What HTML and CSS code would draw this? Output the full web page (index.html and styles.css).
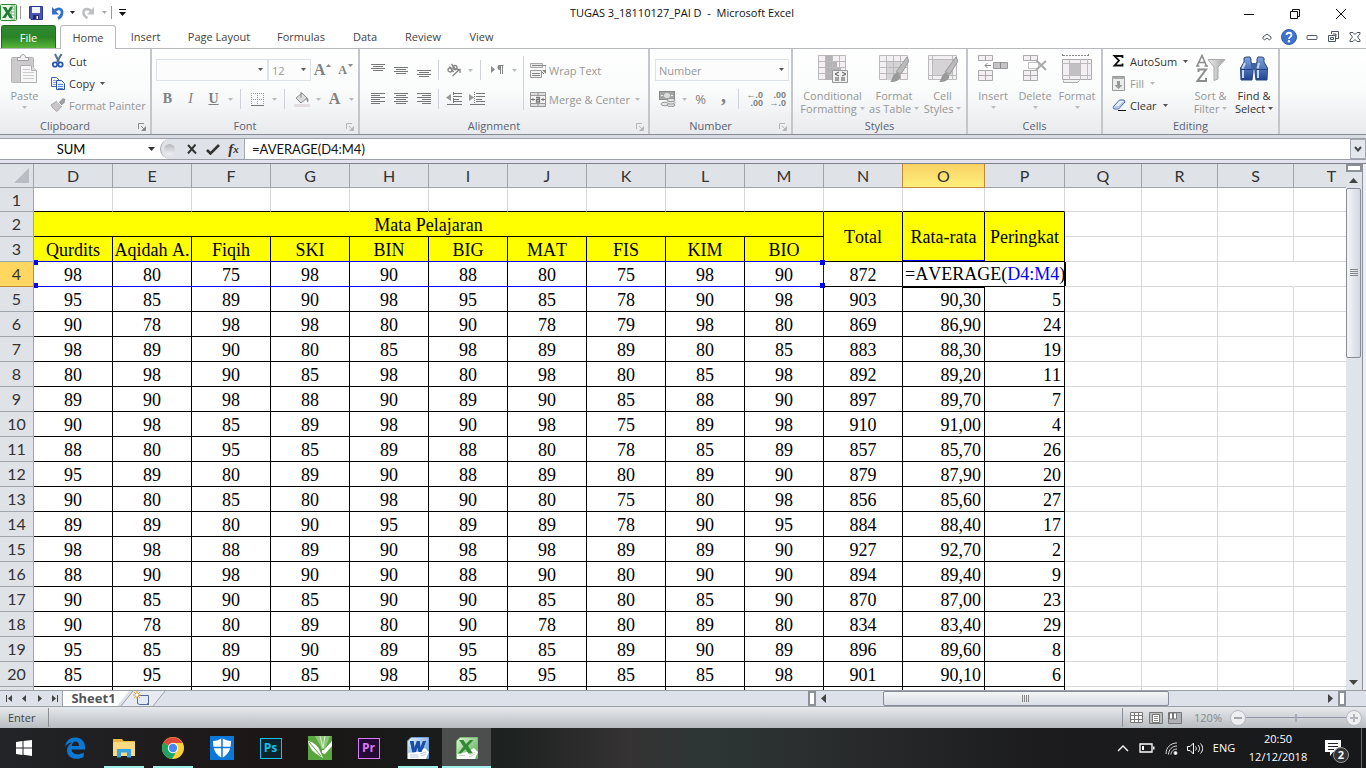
FILE: index.html
```html
<!DOCTYPE html>
<html lang="en">
<head>
<meta charset="utf-8">
<title>TUGAS 3_18110127_PAI D - Microsoft Excel</title>
<link rel="stylesheet" href="styles.css">
</head>
<body>
<svg class="defs" aria-hidden="true">
  <symbol id="dn" viewBox="0 0 7 4"><path d="M0 0h7L3.500 4z" fill="currentColor"/></symbol>
  <symbol id="launch" viewBox="0 0 8 8"><path d="M.5 6V.5H6M3 3l3 3M7.500 3.500v4h-4" fill="none" stroke="currentColor"/><path d="M7 4v3H4z" fill="currentColor"/></symbol>
  <linearGradient id="gBlue" x1="0" y1="0" x2="0" y2="1"><stop offset="0" stop-color="#7fa6e0"/><stop offset="1" stop-color="#1f4396"/></linearGradient>
  <linearGradient id="gGreen" x1="0" y1="0" x2="1" y2="1"><stop offset="0" stop-color="#e4f5dd"/><stop offset="1" stop-color="#4fa84a"/></linearGradient>
  <linearGradient id="gWord" x1="0" y1="0" x2="1" y2="1"><stop offset="0" stop-color="#eaf3fd"/><stop offset="1" stop-color="#4d8ed8"/></linearGradient>
  <linearGradient id="gGrey" x1="0" y1="0" x2="1" y2="0"><stop offset="0" stop-color="#eee"/><stop offset="1" stop-color="#a5a5a5"/></linearGradient>
</svg>

<header class="titlebar">
  <div class="quick">
    <svg width="17" height="17" viewBox="0 0 17 17"><rect x=".5" y=".5" width="16" height="16" rx="1" fill="#e9f6e6" stroke="#2d8a3a"/><path d="M11 2h4v13h-4z" fill="#fff" stroke="#6bb36a"/><path d="M11 5h4M11 8h4M11 11h4" stroke="#6bb36a"/><path d="M2.500 3h3.500l2 3.500L10 3h3L9.500 8.500 13 14H9.500L7.500 10.500 5.500 14H2l4-5.500z" fill="#1d7c33"/></svg>
    <i class="qsep"></i>
    <button aria-label="Save"><svg width="14" height="14" viewBox="0 0 14 14"><path d="M.5.500h13v13H2l-1.500-1.500z" fill="#4a54b8" stroke="#2c3590"/><path d="M3 1h8v6H3z" fill="#f2f6ff"/><path d="M4 9h6v4H4z" fill="#222b66"/><path d="M7.500 10H9v3H7.500z" fill="#fff"/></svg></button>
    <button aria-label="Undo" class="undo"><svg width="14" height="14" viewBox="0 0 14 14"><path d="M3.500 5C7 1.500 11.500 2.500 11 7c-.2 3-2 4.500-4 5.500" fill="none" stroke="#3470c8" stroke-width="2.800"/><path d="M1 1v7.500h7z" fill="#3470c8"/></svg></button>
    <button aria-label="Undo list" class="tiny dark"><svg width="5" height="3"><use href="#dn"/></svg></button>
    <button aria-label="Redo"><svg width="14" height="14" viewBox="0 0 14 14"><path d="M10 5C7 2 2.500 2.500 2.500 6.500c0 3 2 4.500 4 5.500" fill="none" stroke="#bcbfc3" stroke-width="2.600"/><path d="M13 1v7.500H6z" fill="#bcbfc3"/></svg></button>
    <button aria-label="Redo list" class="tiny"><svg width="5" height="3"><use href="#dn"/></svg></button>
    <i class="qsep"></i>
    <button aria-label="Customize Quick Access Toolbar" class="custom"><svg width="7" height="7" viewBox="0 0 7 7"><path d="M0 .500h7" stroke="#111"/><path d="M0 3h7L3.500 7z" fill="#111"/></svg></button>
  </div>
  <h1>TUGAS 3_18110127_PAI D&nbsp; -&nbsp; Microsoft Excel</h1>
  <div class="winbtns">
    <button aria-label="Minimize"><svg width="12" height="12"><path d="M1 6.500h10" stroke="#111"/></svg></button>
    <button aria-label="Restore"><svg width="12" height="12" fill="none" stroke="#111"><path d="M1.500 3.500h7v7h-7zM3.500 3V1.500h7v7H9"/></svg></button>
    <button aria-label="Close"><svg width="12" height="12" stroke="#111"><path d="M1 1l10 10M11 1L1 11"/></svg></button>
  </div>
</header>

<nav class="tabs">
  <button class="file">File</button>
  <button class="tab home">Home</button>
  <button class="tab t-ins">Insert</button>
  <button class="tab t-page">Page Layout</button>
  <button class="tab t-form">Formulas</button>
  <button class="tab t-data">Data</button>
  <button class="tab t-rev">Review</button>
  <button class="tab t-view">View</button>
  <div class="docbtns">
    <button aria-label="Minimize ribbon"><svg width="10" height="8" fill="none" stroke="#4c5560"><path d="M1 4l4-3 4 3v1.500L7.500 7 5 5 2.500 7 1 5.500z"/></svg></button>
    <button aria-label="Help"><svg width="16" height="16"><circle cx="8" cy="8" r="7.500" fill="#3d74c9" stroke="#2c5cae"/><path d="M5.500 6C5.500 3 10.500 3 10.500 6 10.500 7.800 8 8 8 10" fill="none" stroke="#fff" stroke-width="1.800"/><circle cx="8" cy="12.300" r="1.200" fill="#fff"/></svg></button>
    <button aria-label="Minimize window"><svg width="12" height="8"><rect x="1" y="2.500" width="10" height="4" rx="1" fill="none" stroke="#4c5560"/></svg></button>
    <button aria-label="Restore window"><svg width="13" height="12" fill="none" stroke="#4c5560"><path d="M4.500 3V.500h7v7H9M1.500 4.500h7v6h-7zM3.500 6.500h3v2h-3zM6 3h3v2.500"/></svg></button>
    <button aria-label="Close window"><svg width="12" height="10" fill="none" stroke="#4c5560"><path d="M1 .500h3l2 2 2-2h3v1.500L8.500 5 11 8v1.500H8l-2-2-2 2H1V8l2.500-3L1 2z"/></svg></button>
  </div>
</nav>

<main class="ribbon">
  <section class="group g-clip">
    <div class="body">
      <button class="big paste off"><svg width="28" height="30" viewBox="0 0 28 30"><rect x=".5" y="3.500" width="22" height="25" rx="1" fill="#cdcacd" stroke="#b5b2b5"/><path d="M6.500 6.500V3.500h3c0-4 5-4 5 0h3v3z" fill="#f1f1f1" stroke="#9d9d9d"/><path d="M9.500 11.500h11l5 5v12h-16z" fill="#f7f7f7" stroke="#b0b0b0"/><path d="M20.500 11.500v5h5" fill="#ddd" stroke="#b0b0b0"/><path d="M12 15.500h7M12 18.500h11M12 21.500h11M12 24.500h11" stroke="#ccc"/></svg><span>Paste</span><svg class="ar" width="5" height="3"><use href="#dn"/></svg></button>
      <div class="stack clipstack">
        <button class="row"><svg width="16" height="16" viewBox="0 0 16 16"><path d="M5 1l4 8M11.500 1L7 9" stroke="#56708f" stroke-width="2"/><circle cx="5" cy="11.500" r="2.200" fill="none" stroke="#2a59b0" stroke-width="1.800"/><circle cx="10.500" cy="11.500" r="2.200" fill="none" stroke="#2a59b0" stroke-width="1.800"/></svg>Cut</button>
        <button class="row"><svg width="16" height="16" viewBox="0 0 16 16"><path d="M1.500 2.500h5l3 3v6h-8z" fill="#fff" stroke="#3c69b8"/><path d="M3 5.500h3M3 7.500h4M3 9.500h4" stroke="#7fa3dc"/><path d="M6.500 5.500h5l3 3v6h-8z" fill="#e6effc" stroke="#2c57a8"/><path d="M8 9.500h5M8 11.500h5M8 13.500h5" stroke="#5d8ad0"/></svg>Copy<svg class="ar" width="5" height="3"><use href="#dn"/></svg></button>
        <button class="row off"><svg width="16" height="16" viewBox="0 0 16 16"><path d="M9 5l4-4 2.500 1-1 4-4 3z" fill="#9f9f9f"/><path d="M1 8l6-4 5 5-5 5.500C5 13 2 11 1 8z" fill="#c9c6c9" stroke="#aaa"/><path d="M7 4l5 5" stroke="#fff"/></svg>Format Painter</button>
      </div>
    </div>
    <footer>Clipboard<svg class="launch dk" width="8" height="8"><use href="#launch"/></svg></footer>
  </section>

  <section class="group g-font">
    <div class="body rows">
      <div class="line">
        <label class="combo c-font"><select aria-label="Font"><option></option></select><svg class="ar" width="5" height="3"><use href="#dn"/></svg></label>
        <label class="combo c-size"><select aria-label="Font size"><option>12</option></select><svg class="ar" width="5" height="3"><use href="#dn"/></svg></label>
        <button class="ib serif grow" aria-label="Grow font">A<svg width="5" height="3"><path d="M0 3h5L2.500 0z" fill="#888"/></svg></button>
        <button class="ib serif shrink" aria-label="Shrink font">A<svg width="5" height="3"><use href="#dn"/></svg></button>
      </div>
      <div class="line">
        <button class="ib serif b">B</button><button class="ib serif i">I</button><button class="ib serif u">U</button><button class="da" aria-label="Underline styles"><svg width="5" height="3"><use href="#dn"/></svg></button>
        <i class="vs"></i>
        <button class="ib" aria-label="Borders"><svg width="13" height="13" viewBox="0 0 13 13"><path d="M.5 0v12M6.500 0v12M12.500 0v12M0 .500h13M0 6.500h13" stroke="#9a9a9a" stroke-dasharray="1 1"/><path d="M0 12.500h13" stroke="#777"/></svg></button><button class="da" aria-label="Border styles"><svg width="5" height="3"><use href="#dn"/></svg></button>
        <i class="vs"></i>
        <button class="ib" aria-label="Fill color"><svg width="16" height="16" viewBox="0 0 16 16"><path d="M2 7l6-5 5 5-6 5z" fill="#ddd" stroke="#8d8d8d"/><path d="M7 1v6" stroke="#8d8d8d"/><path d="M12 6c2.500 1 3 3 2 5.500-1.500-1-1.500-3-2-5.500z" fill="#8a8a8a"/><path d="M0 13h16v3H0z" fill="#e3dde3"/></svg></button><button class="da" aria-label="Fill colors"><svg width="5" height="3"><use href="#dn"/></svg></button>
        <button class="ib serif fc">A</button><button class="da" aria-label="Font colors"><svg width="5" height="3"><use href="#dn"/></svg></button>
      </div>
    </div>
    <footer>Font<svg class="launch" width="8" height="8"><use href="#launch"/></svg></footer>
  </section>

  <section class="group g-align">
    <div class="body">
      <div class="rows alignleft">
        <div class="line">
          <button class="ib" aria-label="Top align"><svg width="14" height="14" stroke="#777"><path d="M0 1.500h14M2 3.500h10M0 5.500h14M2 7.500h10"/></svg></button>
          <button class="ib" aria-label="Middle align"><svg width="14" height="14" stroke="#777"><path d="M0 4.500h14M2 6.500h10M0 8.500h14M2 10.500h10"/></svg></button>
          <button class="ib" aria-label="Bottom align"><svg width="14" height="14" stroke="#777"><path d="M0 7.500h14M2 9.500h10M0 11.500h14M2 13.500h10"/></svg></button>
          <i class="vs n"></i>
          <button class="ib" aria-label="Orientation"><svg width="16" height="14" viewBox="0 0 16 14"><g fill="none" stroke="#858585" stroke-width="1.300"><circle cx="4" cy="7" r="2"/><path d="M3.500 3.500l4 5.500M5.500 1l4.500 6"/><circle cx="9" cy="4.500" r="2"/><path d="M6.500 13l7-6.500M10.500 6.500h3.500V10"/></g></svg></button><button class="da" aria-label="Orientations"><svg width="5" height="3"><use href="#dn"/></svg></button>
          <i class="vs"></i>
          <button class="ib" aria-label="Text direction"><svg width="13" height="10" viewBox="0 0 13 10"><path d="M0 1l4 3.500L0 8z" fill="#8a8a8a"/><path d="M12.500.500H7.500M9.500 0v9M11.500 0v9" stroke="#858585"/><path d="M9 0a2.500 2.500 0 0 0 0 5z" fill="#858585"/></svg></button><button class="da" aria-label="Text directions"><svg width="5" height="3"><use href="#dn"/></svg></button>
        </div>
        <div class="line">
          <button class="ib" aria-label="Align left"><svg width="14" height="12" stroke="#777"><path d="M0 .500h14M0 2.500h9M0 4.500h14M0 6.500h9M0 8.500h14M0 10.500h9"/></svg></button>
          <button class="ib" aria-label="Center"><svg width="14" height="12" stroke="#777"><path d="M0 .500h14M2 2.500h10M0 4.500h14M2 6.500h10M0 8.500h14M2 10.500h10"/></svg></button>
          <button class="ib" aria-label="Align right"><svg width="14" height="12" stroke="#777"><path d="M0 .500h14M5 2.500h9M0 4.500h14M5 6.500h9M0 8.500h14M5 10.500h9"/></svg></button>
          <i class="vs n"></i>
          <button class="ib" aria-label="Decrease indent"><svg width="16" height="14" stroke="#777"><path d="M7 1.500h9M7 4.500h9M7 7.500h6M7 9.500h9M1 12.500h15" /><path d="M7.500 0v14" stroke-dasharray="1 1"/><path d="M5 2v7L0 5.500z" fill="#999" stroke="none"/></svg></button>
          <button class="ib" aria-label="Increase indent"><svg width="16" height="14" stroke="#777"><path d="M7 1.500h9M7 4.500h9M7 7.500h6M7 9.500h9M1 12.500h15" /><path d="M5.500 0v14" stroke-dasharray="1 1"/><path d="M0 2v7l5-3.500z" fill="#999" stroke="none"/></svg></button>
        </div>
      </div>
      <i class="vs tall"></i>
      <div class="rows wraprows">
        <button class="row off line"><svg width="16" height="15" viewBox="0 0 16 15"><path d="M.5.500h12v4H.500z" fill="#e8e6e8" stroke="#aaa"/><path d="M2 2.500h14v5M11 8l3 3" fill="none" stroke="#888"/><path d="M.5 7.500h11v7H.500z" fill="#f3f3f3" stroke="#999"/><path d="M2 10.500h8M2 12.500h8" stroke="#888"/><path d="M12 7h4v4z" fill="#888"/></svg>Wrap Text</button>
        <button class="row off line"><svg width="16" height="15" viewBox="0 0 16 15"><path d="M.5.500h15v14H.500z" fill="#ddd" stroke="#999"/><path d="M1 3.500h14M1 11.500h14M8 0v3M8 12v3" stroke="#999"/><path d="M1 4h14v7H1z" fill="#f6f6f6"/><path d="M1 7.500h4M11 7.500h4M3 6v3M13 6v3" stroke="#777"/><path d="M6 5.500h3.500v4.500H6.500V7.500h3" fill="none" stroke="#777" stroke-width="1.300"/></svg>Merge &amp; Center<svg class="ar" width="5" height="3"><use href="#dn"/></svg></button>
      </div>
    </div>
    <footer>Alignment<svg class="launch" width="8" height="8"><use href="#launch"/></svg></footer>
  </section>

  <section class="group g-num">
    <div class="body rows">
      <div class="line">
        <label class="combo c-num"><select aria-label="Number format"><option>Number</option></select><svg class="ar" width="5" height="3"><use href="#dn"/></svg></label>
      </div>
      <div class="line numline">
        <button class="ib" aria-label="Accounting format"><svg width="17" height="16" viewBox="0 0 17 16"><rect x=".5" y=".5" width="15" height="8" fill="#a5a5a5" stroke="#8a8a8a"/><ellipse cx="8" cy="4.500" rx="3" ry="2.500" fill="#ddd"/><path d="M2 4.500h2M12 4.500h2" stroke="#eee"/><g fill="#e4e4e4" stroke="#999"><ellipse cx="6" cy="13" rx="4" ry="1.800"/><ellipse cx="12" cy="14" rx="4" ry="1.600"/><ellipse cx="12" cy="11.500" rx="4" ry="1.600"/><ellipse cx="12" cy="9" rx="4" ry="1.600"/></g></svg></button><button class="da" aria-label="Accounting formats"><svg width="5" height="3"><use href="#dn"/></svg></button>
        <button class="ib pct">%</button><button class="ib comma">,</button><i class="vs n"></i>
        <button class="ib dec" aria-label="Increase decimal"><span>←.0</span><span>.00</span></button>
        <button class="ib dec" aria-label="Decrease decimal"><span>.00</span><span>→.0</span></button>
      </div>
    </div>
    <footer>Number<svg class="launch" width="8" height="8"><use href="#launch"/></svg></footer>
  </section>

  <section class="group g-style">
    <div class="body">
      <button class="big off w70"><svg width="30" height="30" viewBox="0 0 30 30"><path d="M.5 1.500h27v24H.500z" fill="#f3eff3" stroke="#bbb"/><path d="M8 1h7v25H8zM15 8h4v6h-4zM15 14h8v6h-8z" fill="#b5b3b5"/><path d="M7.500 1v25M14.500 1v25M21.500 1v25M0 7.500h28M0 13.500h28M0 19.500h28" stroke="#bbb"/><path d="M14.500 16.500h15v12h-15z" fill="#efefef" stroke="#999"/><path d="M21 18l-4 2 4 2M17 24h4M17 26h4M24 18l4 2-4 2M23 24h4M23 26h4" fill="none" stroke="#555"/></svg><span>Conditional<br>Formatting <svg class="ar" width="5" height="3"><use href="#dn"/></svg></span></button>
      <button class="big off w52"><svg width="30" height="30" viewBox="0 0 30 30"><path d="M.5 1.500h28v24H.500z" fill="#f3eff3" stroke="#bbb"/><path d="M7 7h15v19H7z" fill="#d5d3d5"/><path d="M7.500 1v25M14.500 1v25M21.500 1v25M0 7.500h28M0 13.500h28M0 19.500h28" stroke="#bbb"/><path d="M28 3l2 4-8 13-5-2z" fill="#bbb" stroke="#999"/><path d="M11 28c2-1 2-7 6-9 3 0 5 2 4 5-2 4-7 4-10 4z" fill="#999"/></svg><span>Format<br>as Table <svg class="ar" width="5" height="3"><use href="#dn"/></svg></span></button>
      <button class="big off w44"><svg width="30" height="30" viewBox="0 0 30 30"><path d="M.5 1.500h28v24H.500z" fill="#f3eff3" stroke="#bbb"/><path d="M5 6h19v15H5z" fill="#d5d3d5"/><path d="M4.500 1v25M24.500 1v25M0 5.500h28M0 21.500h28" stroke="#bbb"/><path d="M28 3l2 4-8 13-5-2z" fill="#bbb" stroke="#999"/><path d="M11 28c2-1 2-7 6-9 3 0 5 2 4 5-2 4-7 4-10 4z" fill="#999"/></svg><span>Cell<br>Styles <svg class="ar" width="5" height="3"><use href="#dn"/></svg></span></button>
    </div>
    <footer>Styles</footer>
  </section>

  <section class="group g-cells">
    <div class="body">
      <button class="big off w42"><svg width="30" height="30" viewBox="0 0 30 30"><path d="M.5 1.500h14v5H.500zM7.500 1v6M.5 16.500h14v10H.500zM7.500 16v11M0 21.500h15" fill="#f3eff3" stroke="#aaa"/><path d="M15.500 8.500h14v6h-14z" fill="#c5c3c5" stroke="#999"/><path d="M22.500 8v6M13 11.500H7M9.500 9L7 11.500 9.500 14" fill="none" stroke="#888"/></svg><span>Insert</span><svg class="ar" width="5" height="3"><use href="#dn"/></svg></button>
      <button class="big off w42"><svg width="30" height="30" viewBox="0 0 30 30"><path d="M3.500 1.500h14v5h-14zM10.500 1v6M3.500 16.500h14v10h-14zM10.500 16v11M3 21.500h15" fill="#f3eff3" stroke="#aaa"/><path d="M8.500 8.500h10v6h-10z" fill="none" stroke="#888" stroke-dasharray="1 1"/><path d="M16 6l10 10M26 7L16 16" stroke="#aaa" stroke-width="2"/></svg><span>Delete</span><svg class="ar" width="5" height="3"><use href="#dn"/></svg></button>
      <button class="big off w42"><svg width="30" height="30" viewBox="0 0 30 30"><path d="M.5 0v3M26.500 0v3M1 1.500h25" stroke="#888" stroke-dasharray="2 1"/><path d="M.5 5.500h29v20H.500z" fill="#f3eff3" stroke="#aaa"/><path d="M8 10h10v11H8z" fill="#c2c0c2"/><path d="M7.500 5v21M18.500 5v21M25.500 5v21M0 9.500h30M0 21.500h30" stroke="#bbb" fill="none"/><path d="M1.500 26.500v2h14l2-2" fill="#eee" stroke="#aaa"/></svg><span>Format</span><svg class="ar" width="5" height="3"><use href="#dn"/></svg></button>
    </div>
    <footer>Cells</footer>
  </section>

  <section class="group g-edit">
    <div class="body">
      <div class="stack editstack">
        <button class="row"><svg width="14" height="12" viewBox="0 0 14 12"><path d="M10.500 3V1H2.500l4.500 4.500L2.500 10.500h8v-2" fill="none" stroke="#111" stroke-width="1.800"/></svg>AutoSum<svg class="ar" width="5" height="3"><use href="#dn"/></svg></button>
        <button class="row off"><svg width="14" height="15" viewBox="0 0 14 15"><path d="M.5.500h12v14H.500z" fill="#ececec" stroke="#999"/><path d="M0 1h13v2H0z" fill="#aaa"/><path d="M5 5h3v4h2.500l-4 4-4-4H5z" fill="#999"/></svg>Fill<svg class="ar" width="5" height="3"><use href="#dn"/></svg></button>
        <button class="row"><svg width="14" height="12" viewBox="0 0 14 12"><path d="M1 8l6.500-7h4.500l1 2-6.500 7H2z" fill="#e6eefb" stroke="#3f64a8"/><path d="M1 8h5.500l6-6" fill="none" stroke="#8aa5d6"/><path d="M6 11.500h8" stroke="#111"/></svg>Clear<svg class="ar" width="5" height="3"><use href="#dn"/></svg></button>
      </div>
      <button class="big off w44"><svg width="30" height="30" viewBox="0 0 30 30"><path d="M12 5.500h17L22 13v12l-4 1.500V13z" fill="url(#gGrey)" stroke="#aaa"/><path d="M1 12L6 1.500 10.500 12M3 8.500h6M0 12h3.500M8.500 12H12" fill="none" stroke="#8d8d8d" stroke-width="1.600"/><path d="M2.500 18v-2.500H10L1.500 27H10V24" fill="none" stroke="#8d8d8d" stroke-width="2"/></svg><span>Sort &amp;<br>Filter <svg class="ar" width="5" height="3"><use href="#dn"/></svg></span></button>
      <button class="big w42 on"><svg width="30" height="30" viewBox="0 0 30 30"><path d="M7 3h4l1 2v3l2 3v7l-1 8H2l-.5-12L5 8V4z" fill="url(#gBlue)" stroke="#2b4679"/><path d="M23 3h-4l-1 2v3l-2 3v7l1 8h11l.5-12L25 8V4z" fill="url(#gBlue)" stroke="#2b4679"/><path d="M12 9h6v7h-6z" fill="#41629f"/><path d="M3.500 14.500L6 9M18.500 14.500L20 9M4 16v8M19 16v8" stroke="#c6d8f5" stroke-width="2"/><path d="M2 15.500h11M17 15.500h11" stroke="#27427c"/></svg><span>Find &amp;<br>Select <svg class="ar" width="5" height="3"><use href="#dn"/></svg></span></button>
    </div>
    <footer>Editing</footer>
  </section>
</main>

<div class="formula">
  <input class="namebox" aria-label="Name box" value="SUM">
  <button class="namedrop" aria-label="Names"><svg width="7" height="4"><use href="#dn"/></svg></button>
  <div class="fbtns">
    <i class="dot"></i>
    <button aria-label="Cancel"><svg width="10" height="10"><path d="M1 1l8 8.500M8.500.500L1 9.500" stroke="#333" stroke-width="2"/></svg></button>
    <button aria-label="Enter"><svg width="14" height="11"><path d="M1 6l3.500 3.500L13 1" fill="none" stroke="#333" stroke-width="2.600"/></svg></button>
    <button class="fx" aria-label="Insert function">f<small>x</small></button>
  </div>
  <input class="finput" aria-label="Formula" value="=AVERAGE(D4:M4)">
  <button class="expand" aria-label="Expand formula bar"><svg width="8" height="6"><path d="M1 1l3 3.500L7 1" fill="none" stroke="#444" stroke-width="2"/></svg></button>
</div>

<div class="sheetwrap">
  <div class="sheet">
    <table>
      <colgroup><col class="ch"><col class="c79" span="11"><col class="c82"><col class="c80"><col class="c77"><col class="c76" span="3"></colgroup>
      <thead><tr><th class="corner"><svg width="15" height="15"><path d="M15 0v15H0z" fill="#b9bec4"/></svg><th>D<th>E<th>F<th>G<th>H<th>I<th>J<th>K<th>L<th>M<th>N<th class="sel">O<th>P<th>Q<th>R<th>S<th>T</tr></thead>
      <tbody>
      <tr class="r1"><th>1<td><td><td><td><td><td><td><td><td><td><td><td><td><td class="x"><td class="x"><td class="x"><td class="x"></tr>
      <tr class="hd"><th>2<td colspan="10">Mata Pelajaran<td rowspan="2">Total<td rowspan="2">Rata-rata<td rowspan="2">Peringkat<td class="x"><td class="x"><td class="x"><td class="x"></tr>
      <tr class="hd h3"><th>3<td>Qurdits<td>Aqidah A.<td>Fiqih<td>SKI<td>BIN<td>BIG<td>MAT<td>FIS<td>KIM<td>BIO<td class="x"><td class="x"><td class="x"><td class="x"></tr>
      <tr class="r4"><th class="sel">4<td class="rf"><i class="h tl"></i><i class="h bl"></i>98<td class="rf">80<td class="rf">75<td class="rf">98<td class="rf">90<td class="rf">88<td class="rf">80<td class="rf">75<td class="rf">98<td class="rf last"><i class="h tr"></i><i class="h br"></i>90<td>872<td class="active"><i class="outline"></i><div class="editor" role="textbox" contenteditable="true" aria-label="Cell O4">=AVERAGE(<span>D4:M4</span>)</div><td><td class="x"><td class="x"><td class="x nr"><td class="x"></tr>
      <tr><th>5<td>95<td>85<td>89<td>90<td>98<td>95<td>85<td>78<td>90<td>98<td>903<td class="n">90,30<td class="n">5<td class="x"><td class="x"><td class="x"><td class="x"></tr>
      <tr><th>6<td>90<td>78<td>98<td>98<td>80<td>90<td>78<td>79<td>98<td>80<td>869<td class="n">86,90<td class="n">24<td class="x"><td class="x"><td class="x"><td class="x"></tr>
      <tr><th>7<td>98<td>89<td>90<td>80<td>85<td>98<td>89<td>89<td>80<td>85<td>883<td class="n">88,30<td class="n">19<td class="x"><td class="x"><td class="x"><td class="x"></tr>
      <tr><th>8<td>80<td>98<td>90<td>85<td>98<td>80<td>98<td>80<td>85<td>98<td>892<td class="n">89,20<td class="n">11<td class="x"><td class="x"><td class="x"><td class="x"></tr>
      <tr><th>9<td>89<td>90<td>98<td>88<td>90<td>89<td>90<td>85<td>88<td>90<td>897<td class="n">89,70<td class="n">7<td class="x"><td class="x"><td class="x"><td class="x"></tr>
      <tr><th>10<td>90<td>98<td>85<td>89<td>98<td>90<td>98<td>75<td>89<td>98<td>910<td class="n">91,00<td class="n">4<td class="x"><td class="x"><td class="x"><td class="x"></tr>
      <tr><th>11<td>88<td>80<td>95<td>85<td>89<td>88<td>80<td>78<td>85<td>89<td>857<td class="n">85,70<td class="n">26<td class="x"><td class="x"><td class="x"><td class="x"></tr>
      <tr><th>12<td>95<td>89<td>80<td>89<td>90<td>88<td>89<td>80<td>89<td>90<td>879<td class="n">87,90<td class="n">20<td class="x"><td class="x"><td class="x"><td class="x"></tr>
      <tr><th>13<td>90<td>80<td>85<td>80<td>98<td>90<td>80<td>75<td>80<td>98<td>856<td class="n">85,60<td class="n">27<td class="x"><td class="x"><td class="x"><td class="x"></tr>
      <tr><th>14<td>89<td>89<td>80<td>90<td>95<td>89<td>89<td>78<td>90<td>95<td>884<td class="n">88,40<td class="n">17<td class="x"><td class="x"><td class="x"><td class="x"></tr>
      <tr><th>15<td>98<td>98<td>88<td>89<td>90<td>98<td>98<td>89<td>89<td>90<td>927<td class="n">92,70<td class="n">2<td class="x"><td class="x"><td class="x"><td class="x"></tr>
      <tr><th>16<td>88<td>90<td>98<td>90<td>90<td>88<td>90<td>80<td>90<td>90<td>894<td class="n">89,40<td class="n">9<td class="x"><td class="x"><td class="x"><td class="x"></tr>
      <tr><th>17<td>90<td>85<td>90<td>85<td>90<td>90<td>85<td>80<td>85<td>90<td>870<td class="n">87,00<td class="n">23<td class="x"><td class="x"><td class="x"><td class="x"></tr>
      <tr><th>18<td>90<td>78<td>80<td>89<td>80<td>90<td>78<td>80<td>89<td>80<td>834<td class="n">83,40<td class="n">29<td class="x"><td class="x"><td class="x"><td class="x"></tr>
      <tr><th>19<td>95<td>85<td>89<td>90<td>89<td>95<td>85<td>89<td>90<td>89<td>896<td class="n">89,60<td class="n">8<td class="x"><td class="x"><td class="x"><td class="x"></tr>
      <tr><th>20<td>85<td>95<td>90<td>85<td>98<td>85<td>95<td>85<td>85<td>98<td>901<td class="n">90,10<td class="n">6<td class="x"><td class="x"><td class="x"><td class="x"></tr>
      <tr><th><td><td><td><td><td><td><td><td><td><td><td><td><td><td class="x"><td class="x"><td class="x"><td class="x"></tr>
      </tbody>
    </table>
  </div>
  <div class="vscroll">
    <i class="vsplit"></i>
    <button aria-label="Scroll up"><svg width="9" height="5"><path d="M0 5h9L4.500 0z" fill="#444"/></svg></button>
    <div class="vtrack"><div class="vthumb"><i></i></div></div>
    <button aria-label="Scroll down"><svg width="9" height="5"><path d="M0 0h9L4.500 5z" fill="#444"/></svg></button>
  </div>
</div>

<div class="strip">
  <div class="nav">
    <button aria-label="First sheet"><svg width="7" height="7"><path d="M.5 0v7" stroke="#444"/><path d="M6 0v7L2 3.500z" fill="#444"/></svg></button>
    <button aria-label="Previous sheet"><svg width="7" height="7"><path d="M5 0v7L1 3.500z" fill="#444"/></svg></button>
    <button aria-label="Next sheet"><svg width="7" height="7"><path d="M2 0v7l4-3.500z" fill="#444"/></svg></button>
    <button aria-label="Last sheet"><svg width="7" height="7"><path d="M6.500 0v7" stroke="#444"/><path d="M1 0v7l4-3.500z" fill="#444"/></svg></button>
  </div>
  <button class="sheettab">Sheet1</button>
  <button class="newsheet" aria-label="Insert worksheet"><svg width="46" height="15" viewBox="0 0 46 15"><path d="M13 0H45L33 15H1z" fill="#e8ebf1"/><path d="M13 0L1 15M45 0L33 15" stroke="#9a9fa8"/><path d="M17.500 4.500h11v8l-2 1h-7l-2-1z" fill="#e3ebfa" stroke="#54689a"/><path d="M26 14l3-3v3z" fill="#54689a"/><path d="M17 0v8M13 4h8M14 1l6 6M20 1l-6 6" stroke="#e3a03c"/><circle cx="17" cy="4" r="1.500" fill="#fff"/></svg></button>
  <div class="hscroll">
    <i class="hsplit"></i>
    <button aria-label="Scroll left"><svg width="5" height="9"><path d="M5 0v9L0 4.500z" fill="#444"/></svg></button>
    <div class="htrack"><div class="hthumb"><i></i></div></div>
    <button aria-label="Scroll right"><svg width="5" height="9"><path d="M0 0v9l5-4.500z" fill="#444"/></svg></button>
    <i class="hsplit"></i>
  </div>
</div>

<div class="status">
  <span class="mode">Enter</span>
  <div class="views">
    <button aria-label="Normal view"><svg width="14" height="11" fill="#fff" stroke="#777"><path d="M.5.500h12v10H.500zM4.500 0v11M8.500 0v11M0 3.500h13M0 7.500h13"/></svg></button>
    <button aria-label="Page layout view"><svg width="14" height="12"><path d="M.5.500h13v11H.500z" fill="#bbb" stroke="#777"/><path d="M3.500 2.500h7v8h-7z" fill="#fff" stroke="#777"/><path d="M5 4.500h4M5 6.500h4M5 8.500h4" stroke="#888"/></svg></button>
    <button aria-label="Page break view"><svg width="14" height="12"><path d="M.5.500h13v11H.500z" fill="#aeb2b6" stroke="#777"/><path d="M1.500 1h3v6h-3zM5.500 1h3v6h-3z" fill="#fff" stroke="#777"/></svg></button>
  </div>
  <label class="pct120" for="zoom">120%</label>
  <button class="zb" aria-label="Zoom out"><svg width="16" height="16"><circle cx="8" cy="8" r="7.500" fill="#eceef0" stroke="#b7babf"/><path d="M4 8h8" stroke="#a3a6ac" stroke-width="2"/></svg></button>
  <input type="range" id="zoom" min="0" max="100" value="50">
  <button class="zb" aria-label="Zoom in"><svg width="16" height="16"><circle cx="8" cy="8" r="7.500" fill="#eceef0" stroke="#b7babf"/><path d="M4 8h8M8 4v8" stroke="#b3b6bc" stroke-width="2"/></svg></button>
</div>

<footer class="taskbar">
  <button class="start" aria-label="Start"><svg width="16" height="16" viewBox="0 0 16 16"><path d="M0 2l6.500-1v6.500H0zM7.500.900L16 0v7.500H7.500zM0 8.500h6.500V15L0 14zM7.500 8.500H16V16l-8.500-1.200z" fill="#fff"/></svg></button>
  <button aria-label="Edge"><svg width="20" height="22" viewBox="0 0 20 22"><path d="M0 10C1 3.500 5 .500 10.500.500 16 .500 20 4.500 20 10v2.500H6.500c.3 3 2.500 4.800 6 4.800 2.300 0 4.300-.6 6.200-1.800v4.500c-2 1.200-4.500 1.800-7.200 1.800C6 21.800 2 18.500 2 13.500c0-3.500 2-6.500 5.500-8C4.500 5.500 1.500 7 0 10zm6.700-1h7.300c0-3-1.300-4.500-3.500-4.500-2 0-3.500 1.800-3.800 4.500z" fill="#0b78d4"/></svg></button>
  <button class="run" aria-label="File Explorer"><svg width="22" height="19" viewBox="0 0 22 19"><path d="M0 0h9l1.500 2H22v15H0z" fill="#e9b93f"/><path d="M0 3h22v14H0z" fill="#fbdb82"/><path d="M4 10h14v8.500h-4V13.500H8v5H4z" fill="#34a4e2"/></svg></button>
  <button class="run" aria-label="Chrome"><svg width="22" height="22" viewBox="0 0 22 22"><circle cx="11" cy="11" r="11" fill="#fdd036"/><path d="M11 11L1.500 5.500A11 11 0 0 0 10 22l5-8.500z" fill="#1ea362"/><path d="M1.500 5.500A11 11 0 0 1 20.500 6H11V11z" fill="#dd4a3c"/><circle cx="11" cy="11" r="5.200" fill="#fff"/><circle cx="11" cy="11" r="4.200" fill="#4a89f0"/></svg></button>
  <button aria-label="Defender"><svg width="24" height="24" viewBox="0 0 24 24"><path d="M0 0h24v24H0z" fill="#0a78d7"/><path d="M12 2c3 2 6 3 9 3 0 8-2 13-9 17C5 18 3 13 3 5c3 0 6-1 9-3z" fill="#fff"/><path d="M12 2v20M2 11.500h20" stroke="#0a78d7" stroke-width="1.500"/></svg></button>
  <button aria-label="Photoshop"><span class="app ps">Ps</span></button>
  <button aria-label="CorelDRAW"><svg width="24" height="24" viewBox="0 0 24 24"><path d="M0 0h24v24H0z" fill="#5aa63e"/><path d="M7 0h15l-5 13h-3z" fill="#8fc57a"/><path d="M12 0l3 12M17 0l-2 12" stroke="#d7edcc"/><path d="M0 5c5 1 9 4 11 8l4 9-8-5C3 14 1 10 0 5z" fill="#fff"/><path d="M1 6l12 14" stroke="#5aa63e"/><path d="M14 14l2 0 8-9v5l-7 8-3-1z" fill="#fff"/></svg></button>
  <button aria-label="Premiere"><span class="app pr">Pr</span></button>
  <button class="run" aria-label="Word"><svg width="22" height="22" viewBox="0 0 22 22"><path d="M.5 4L4 .500h17.500v21H.500z" fill="url(#gWord)" stroke="#6d9fd8"/><path d="M3 4h3.500l1 7L10 4h2.500l1 7L16 4h3l-4.500 12h-3l-.8-6-2.200 6h-3z" fill="#1650a8"/><path d="M1 16l9-1 8-4 4 4-3 7H1z" fill="#fff"/><path d="M3 4h3.500l1 7L10 4h2.500l1 7L16 4h3l-4.500 11h-3l-.8-5-2.200 5h-3z" fill="#1650a8"/><path d="M13 17l6-2M14 19l5-2M3 18h8M3 20h9" stroke="#b4cae8"/></svg></button>
  <button class="cur" aria-label="Excel"><svg width="22" height="22" viewBox="0 0 22 22"><path d="M.5 4L4 .500h17.500v21H.500z" fill="url(#gGreen)" stroke="#7dbb74"/><path d="M1 17l10-2 7-4 4 4-3 7H1z" fill="#fff"/><path d="M3 3h4.500l2.500 4 4-4h3.500l-5.500 6 5 7.500h-4.500L9.500 12 5 16.500H2l5.500-7z" fill="#2f8a33"/><path d="M13 18l6-3M13 20l6-3M3 18.500h6" stroke="#bcd8b5"/></svg></button>
  <div class="tray">
    <button class="t1" aria-label="Hidden icons"><svg width="12" height="8"><path d="M1 7l5-5 5 5" fill="none" stroke="#fff" stroke-width="1.400"/></svg></button>
    <button class="t2" aria-label="Battery"><svg width="16" height="10"><path d="M1 1h12v8H1z" fill="none" stroke="#fff" stroke-width="1.300"/><path d="M3 3h2v4H3zM14 3.500h1.500v3H14z" fill="#fff"/></svg></button>
    <button class="t2" aria-label="Network"><svg width="13" height="13" fill="none" stroke="#ddd"><path d="M1 12C1 5 6 1 12 1M3.500 12.500c0-5 4-8.500 8.500-8.500M6 12.500C6 9.500 8.500 7 12 7"/><circle cx="10.500" cy="11" r="1.500" fill="#fff"/></svg></button>
    <button class="t2" aria-label="Volume"><svg width="17" height="13" fill="none" stroke="#fff"><path d="M.5 4.500h2.500L6.500 1v11L3 8.500H.500zM8.500 4.500c1 1.300 1 2.700 0 4M11 3c2 2.300 2 5 0 7M13.500 1.500c2.800 3 2.800 7 0 10"/></svg></button>
    <button class="lang">ENG</button>
    <button class="clock">20:50<br>12/12/2018</button>
    <button class="notif" aria-label="Notifications"><svg width="17" height="16"><path d="M0 0h16v12H8l-3 4v-4H0z" fill="#fff"/><path d="M3 3.500h10M3 6.500h10M3 9.500h6" stroke="#222"/></svg><span>2</span></button>
    <button class="peek" aria-label="Show desktop"></button>
  </div>
</footer>
</body>
</html>
```
FILE: styles.css
```css
* { box-sizing: border-box; }
html, body { height: 100%; }
body {
  margin: 0;
  display: flex;
  flex-direction: column;
  overflow: hidden;
  background: #fff;
  color: #333;
  font: 11px/13px "Open Sans", "Noto Sans", sans-serif;
}
button {
  margin: 0;
  padding: 0;
  border: 0;
  background: none;
  color: inherit;
  font: inherit;
  display: flex;
  align-items: center;
  justify-content: center;
}
svg { flex: none; display: block; }
i { font-style: normal; display: block; flex: none; }
.defs { position: absolute; width: 0; height: 0; }

/* Title bar */
.titlebar { flex: 0 0 25px; display: flex; align-items: center; }
.quick { flex: 1; height: 22px; display: flex; align-items: center; }
.quick button { width: 24px; color: #aaa; }
.quick .undo { width: 20px; }
.quick .tiny { width: 8px; }
.quick .dark { color: #222; }
.quick .custom { width: 14px; }
.qsep { width: 1px; height: 13px; margin: 0 3px; background: #999; }
h1 { margin: 0; font: 11px/16px "Open Sans", sans-serif; color: #111; }
.winbtns { flex: 1; display: flex; justify-content: flex-end; padding-right: 2px; padding-top: 2px; }
.winbtns button { width: 46px; height: 20px; }

/* Ribbon tabs */
.tabs { flex: 0 0 24px; min-height: 0; display: flex; border-bottom: 1px solid #b6babf; padding-left: 1px; }
.tabs .file {
  width: 55px;
  height: 23px;
  margin-right: 4px;
  border: 1px solid #1c6a1f;
  border-bottom: 0;
  border-radius: 3px 3px 0 0;
  background: linear-gradient(#2f8a32, #2a8426 50%, #57b53a);
  color: #fff;
}
.tab { color: #444; }
.home {
  width: 56px;
  height: 24px;
  border: 1px solid #b6babf;
  border-bottom: 0;
  border-radius: 3px 3px 0 0;
  background: #fff;
}
.t-ins { width: 59px; }
.t-page { width: 88px; }
.t-form { width: 76px; }
.t-data { width: 52px; }
.t-rev { width: 64px; }
.t-view { width: 53px; }
.docbtns { margin-left: auto; display: flex; gap: 9px; padding-right: 5px; }

/* Ribbon */
.ribbon {
  flex: 0 0 86px;
  min-height: 0;
  display: flex;
  background: linear-gradient(#fff, #fafbfb 50%, #e8eaed);
  border-bottom: 1px solid #878c94;
}
.group { display: flex; flex-direction: column; border-right: 2px solid #c3c6cb; }
.g-clip { width: 152px; }
.g-font { width: 208px; }
.g-align { width: 290px; }
.g-num { width: 143px; }
.g-style { width: 175px; }
.g-cells { width: 135px; }
.g-edit { width: 177px; }
.body { flex: 1; min-height: 0; display: flex; }
.group footer {
  position: relative;
  flex: 0 0 17px;
  padding-top: 2px;
  text-align: center;
  color: #5a6275;
  padding-right: 20px;
}
.g-style footer, .g-cells footer, .g-edit footer { padding-right: 0; }
.launch { position: absolute; right: 4px; top: 6px; color: #b4b7bb; }
.dk { color: #888; }
.ar { color: #555; }
.off { color: #979797; }
.off .ar { color: #bbb; }
.stack { display: flex; flex-direction: column; padding-top: 1px; }
.row { height: 22px; justify-content: flex-start; gap: 3px; white-space: nowrap; }
.row .ar { margin-left: 2px; }
.clipstack { padding-left: 1px; }
.editstack { width: 76px; }
.editstack .row { gap: 4px; }
.g-edit .body { padding-left: 9px; }
.g-style .body { padding-left: 4px; }
.g-cells .body { padding-left: 4px; }
.big { flex-direction: column; justify-content: flex-start; padding-top: 5px; height: 68px; }
.big span { white-space: nowrap; margin-top: 5px; line-height: 13px; }
.big span .ar { display: inline-block; vertical-align: 3px; }
.big > .ar { margin-top: 4px; }
.paste { width: 49px; }
.w70 { width: 71px; }
.w52 { width: 52px; }
.w44 { width: 45px; }
.w42 { width: 42px; }
.rows { display: flex; flex-direction: column; gap: 7px; padding: 10px 0 0 4px; }
.line { display: flex; align-items: center; height: 22px; }
.ib { width: 23px; height: 22px; color: #808080; }
.da { width: 10px; height: 22px; color: #bbb; }
.vs { width: 1px; height: 20px; margin: 0 5px; background: #cfd2d8; }
.vs.n { margin: 0 3px; }
.vs.tall { height: 54px; margin: 7px 6px 0 0; }
.alignleft { width: 163px; padding-left: 6px; }
.wraprows { padding-left: 0; }
.serif { font: bold 16px/16px "Liberation Serif", serif; }
.serif.i { font-style: italic; font-weight: normal; }
.serif.u { text-decoration: underline; }
.serif.b, .serif.i, .serif.u { font-size: 14px; }
.grow svg, .shrink svg { margin: 0 0 9px 1px; color: #888; }
.serif.shrink { font-size: 12px; }
.combo { position: relative; display: block; height: 22px; }
.combo select {
  appearance: none;
  width: 100%;
  height: 100%;
  padding: 0 3px;
  border: 1px solid #dde1e8;
  border-radius: 0;
  background: #fcfcfd;
  color: #999;
  font: inherit;
}
.combo .ar { position: absolute; right: 5px; top: 9px; }
.c-font { width: 112px; }
.c-size { width: 43px; }
.c-num { width: 134px; margin-left: 1px; }
.numline { padding-left: 2px; }
.pct { font-size: 13px; }
.comma { font: bold 20px/12px "Liberation Serif", serif; padding-bottom: 8px; }
.dec { flex-direction: column; font: bold 9px/8px "Liberation Sans", sans-serif; align-items: flex-end; padding-right: 2px; }

/* Formula bar */
.formula {
  flex: 0 0 22px;
  min-height: 0;
  margin: 3px 0;
  display: flex;
  border: solid #9a9fa8;
  border-width: 1px 0;
  box-shadow: 0 -3px #d8dbe2, 0 3px #e3e4f0;
}
.namebox { width: 142px; border: 0; text-align: center; font: 13px/18px Lato, sans-serif; padding: 0; }
.namedrop { width: 18px; color: #333; }
.fbtns {
  width: 85px;
  display: flex;
  align-items: center;
  background: #dfe2e8;
  border: 1px solid #a4a8b0;
  border-width: 0 1px;
  border-radius: 10px 0 0 10px;
}
.fbtns button { width: 21px; }
.dot { width: 11px; height: 11px; margin: 0 6px 0 3px; border-radius: 6px; background: linear-gradient(#b5b8be, #f0f1f4); }
.fbtns .fx { font: italic bold 15px/16px "Liberation Serif", serif; }
.fx small { font-size: 11px; }
.finput { flex: 1; min-width: 0; border: 0; padding: 0 7px; font: 13px/18px Lato, sans-serif; color: #111; }
.expand { width: 16px; background: #e4e7ec; border: 1px solid #a4a8b0; }

/* Sheet */
.sheetwrap { flex: 1; min-height: 0; display: flex; border-top: 1px solid #7f838b; }
.sheet { flex: 1; min-width: 0; overflow: hidden; }
table { table-layout: fixed; width: 1370px; border-collapse: separate; border-spacing: 0; }
.ch { width: 34px; }
.c79 { width: 79px; }
.c82 { width: 82px; }
.c80 { width: 80px; }
.c77 { width: 77px; }
.c76 { width: 76px; }
th, td { height: 25px; padding: 0; border: solid #000; border-width: 0 1px 1px 0; text-align: center; white-space: nowrap; }
td { position: relative; font: 18px/22px "Liberation Serif", serif; font-kerning: none; color: #000; padding-top: 1px; }
th { background: #dfe2e7; border-color: #9fa5ad; font: 16px/22px Lato, sans-serif; color: #333; }
thead th, .r1 th, .r1 td { height: 24px; }
.r1 td { border-right-color: #d8d8d8; }
.corner svg { margin: 0 4px 0 auto; }
th.sel { background: #ffd65f; border-color: #c08a3c; }
thead .sel { background: linear-gradient(#f9d164, #fff07c); box-shadow: -1px 0 #c08a3c; }
td.x { border-color: #d8d8d8; }
td.nr { border-right-color: #fff; }
td.n { text-align: right; padding-right: 3px; }
.hd td:not(.x) { background: #ff0; }
.hd.h3 td:not(.x) { border-bottom-color: #00f; }
.r4 td.rf { border-bottom-color: #00f; }
.r4 td.last { border-right-color: #00f; }
.h { position: absolute; width: 4px; height: 5px; background: #00f; }
.tl { left: 0; top: -2px; }
.bl { left: 0; bottom: -2px; }
.tr { right: -2px; top: -2px; width: 5px; }
.br { right: -2px; bottom: -2px; width: 5px; }
.outline { position: absolute; left: -1px; right: -1px; top: -2px; bottom: -2px; border: 1px solid #000; border-top-color: #00f; }
.editor { position: absolute; left: 0; top: 0; height: 24px; padding: 1px 0 0 2px; background: #fff; border-right: 1px solid #000; outline: 0; }
.editor span { color: #00f; }

/* Scroll bars */
.vscroll {
  flex: 0 0 20px;
  display: flex;
  flex-direction: column;
  background: #dfe3ea;
  border-right: 3px solid #eceef3;
  box-shadow: inset -1px 0 #8c9098;
}
.vsplit { height: 8px; margin-right: 1px; border: 2px solid #8c9098; background: #fff; }
.vscroll button { height: 16px; width: 14px; }
.vtrack { flex: 1; }
.vthumb {
  height: 35%;
  width: 15px;
  display: flex;
  align-items: center;
  justify-content: center;
  border: 1px solid #858b98;
  border-radius: 2px;
  background: linear-gradient(90deg, #f3f5f8, #d3d8e0);
}
.vthumb i { width: 8px; height: 8px; background: repeating-linear-gradient(#888 0 1px, transparent 1px 2px); }

.strip {
  flex: 0 0 17px;
  min-height: 0;
  display: flex;
  background: #dde1e9;
  border: solid #9a9fa8;
  border-width: 1px 0;
}
.nav { width: 63px; display: flex; padding-left: 2px; border-right: 1px solid #9a9fa8; }
.nav button { width: 15px; }
.sheettab {
  width: 66px;
  background: #fff;
  font: bold 13px/15px "Noto Sans", sans-serif;
  color: #555;
  clip-path: polygon(0 0, 100% 0, 82% 100%, 0 100%);
  padding-right: 5px;
}
.newsheet { margin-left: -9px; }
.hscroll { flex: 0 0 39.400%; margin-left: auto; margin-right: 20px; display: flex; align-items: stretch; }
.hscroll button { width: 16px; }
.hsplit { width: 8px; border: 2px solid #8c9098; background: #fff; }
.htrack { flex: 1; padding-left: 3.800%; }
.hthumb {
  width: 65%;
  height: 15px;
  display: flex;
  align-items: center;
  justify-content: center;
  border: 1px solid #858b98;
  border-radius: 2px;
  background: linear-gradient(#f3f5f8, #d9dde5);
}
.htrack { padding-left: 9.600%; }
.hthumb i { height: 7px; width: 8px; background: repeating-linear-gradient(90deg, #888 0 1px, transparent 1px 2px); }

/* Status bar */
.status {
  flex: 0 0 21px;
  min-height: 0;
  display: flex;
  align-items: center;
  padding: 0 4px 0 8px;
  background: linear-gradient(#e6e9ec, #b8bdc2);
  color: #444;
}
.mode { width: 41px; line-height: 19px; border-right: 1px solid #8c9096; }
.views { margin-left: auto; display: flex; gap: 5px; padding-left: 7px; border-left: 1px solid #8c9096; height: 19px; }
.pct120 { color: #85898e; margin: 0 8px 0 12px; }
#zoom { appearance: none; flex: 0 0 100px; min-width: 0; margin: 0; height: 16px; background: linear-gradient(#8f94a6, #8f94a6) center / 100% 1px no-repeat; }
#zoom::-webkit-slider-thumb { appearance: none; width: 2px; height: 8px; background: #a5a9b8; }

/* Taskbar */
.taskbar {
  flex: 0 0 40px;
  display: flex;
  background: linear-gradient(90deg, #222427, #1c1616 20%, #181a19 30%, #1f2321 38%, #353233 46%, #2c3635 52%, #2a2d2d 60%, #1c1c1e 76%, #17181a);
  color: #fff;
}
.taskbar > button { width: 49px; }
.taskbar .start { width: 50px; padding-right: 2px; }
.run { background: linear-gradient(#a0efe6, #a0efe6) center bottom / 40px 2px no-repeat; }
.cur { background: linear-gradient(#a0efe6, #a0efe6) center bottom / 100% 2px no-repeat #4c4e4e; }
.app { width: 22px; height: 21px; border: 1px solid; font: bold 12px/18px "Open Sans", sans-serif; text-align: center; }
.ps { color: #19c0e8; background: #0a2430; border-color: #19c0e8; }
.pr { color: #d97bf5; background: #250936; border-color: #d97bf5; }
.tray { margin-left: auto; display: flex; line-height: 18px; }
.t1 { width: 24px; }
.t2 { width: 24px; }
.lang { width: 34px; }
.clock { width: 74px; text-align: center; }
.notif { width: 46px; padding-right: 10px; position: relative; }
.notif span {
  position: absolute;
  left: 18px;
  top: 19px;
  width: 16px;
  height: 16px;
  border: 1px solid #999;
  border-radius: 8px;
  background: #333;
  font: bold 11px/14px "Open Sans", sans-serif;
}
.peek { width: 5px; border-left: 1px solid #666; }
```
